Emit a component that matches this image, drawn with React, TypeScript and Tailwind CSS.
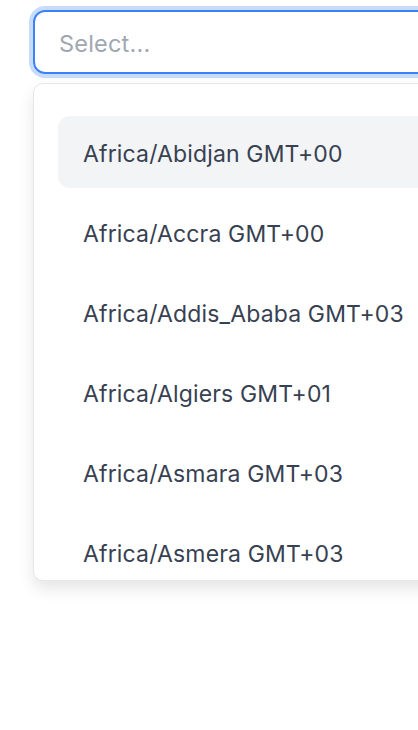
const ZONES = [
  'Africa/Abidjan GMT+00',
  'Africa/Accra GMT+00',
  'Africa/Addis_Ababa GMT+03',
  'Africa/Algiers GMT+01',
  'Africa/Asmara GMT+03',
  'Africa/Asmera GMT+03',
];

export default function App() {
  return (
    <div className="h-[730px] w-[418px] overflow-hidden bg-white font-['Inter',sans-serif]">
      <div className="ml-[33px] mt-[10px] w-[520px]">
        {/* Input */}
        <div className="flex h-[64px] items-center rounded-[12px] border-2 border-[#3b82f6] px-[24px] pt-[3px] shadow-[0_0_0_4px_#c7dcfa]">
          <span className="text-[23.5px] tracking-[0.2px] text-[#a0a7b2]">Select...</span>
        </div>

        {/* Menu */}
        <div className="mt-[9px] h-[498px] overflow-hidden rounded-[10px] border border-[#e5e7eb] bg-white px-[24px] pt-[32px] shadow-[0_8px_16px_rgba(0,0,0,0.10)]">
          <ul className="flex flex-col gap-[8px]">
            {ZONES.map((zone, i) => (
              <li
                key={zone}
                className={
                  'flex h-[72px] shrink-0 items-center whitespace-nowrap rounded-[12px] px-[25px] pt-[4px] text-[23px] tracking-[0.15px] text-[#374151] ' +
                  (i === 0 ? 'bg-[#f3f4f6]' : '')
                }
              >
                {zone}
              </li>
            ))}
          </ul>
        </div>
      </div>
    </div>
  );
}
